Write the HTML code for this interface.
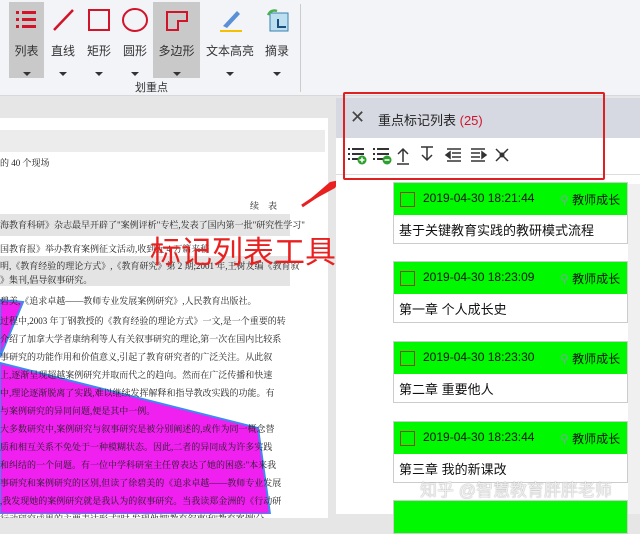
<!DOCTYPE html>
<html><head><meta charset="utf-8"><style>
*{margin:0;padding:0;box-sizing:border-box}
body{width:640px;height:514px;overflow:hidden;position:relative;background:#e6e6e6;font-family:"Liberation Sans","Noto Sans CJK SC",sans-serif}
.abs{position:absolute}
#tb{left:0;top:0;width:640px;height:96px;background:#f3f4f8;border-bottom:1px solid #d8d8d8}
.btn{position:absolute;top:2px;height:76px;text-align:center;font-size:12px;color:#333}
.btn .lb{position:absolute;top:40px;width:100%}
.btn .ar{position:absolute;top:70px;left:50%;margin-left:-4px;border-left:4px solid transparent;border-right:4px solid transparent;border-top:4px solid #333}
.sel{background:#c9c9c9}
#pagebg{left:0;top:118px;width:328px;height:400px;background:#fff}
#page{left:0;top:118px;width:328px;height:400px;font-family:"Liberation Serif","Noto Serif CJK SC",serif;font-size:9px;color:#222;overflow:hidden}
.ln{position:absolute;left:0;white-space:nowrap}
#panel{left:336px;top:98px;width:304px;height:416px;background:#fff}
.card{position:absolute;left:393px;width:235px;border:1px solid #ccc;background:#fff;overflow:hidden}
.gh{height:32px;background:#00f800;font-size:12px;color:#111;position:relative}
.gh .cb{position:absolute;left:6px;top:9px;width:15px;height:15px;border:1.5px solid #8a4a10}
.gh .t{position:absolute;left:29px;top:8px}
.gh .g{position:absolute;left:168px;top:8px;white-space:nowrap}
.tx{height:28px;font-size:13px;padding:5px 5px;color:#111}
</style></head><body>
<div id="tb" class="abs">
 <div class="btn sel" style="left:9px;width:35px">
  <svg class="abs" style="left:7px;top:6px" width="22" height="22"><g fill="#d2142a"><rect x="0" y="3" width="3" height="3"/><rect x="6" y="3" width="14" height="3"/><rect x="0" y="10" width="3" height="3"/><rect x="6" y="10" width="14" height="3"/><rect x="0" y="17" width="3" height="3"/><rect x="6" y="17" width="14" height="3"/></g></svg>
  <div class="lb">列表</div><div class="ar"></div></div>
 <div class="btn" style="left:46px;width:34px">
  <svg class="abs" style="left:6px;top:6px" width="24" height="24"><line x1="2" y1="22" x2="21" y2="2" stroke="#d2142a" stroke-width="2.5"/></svg>
  <div class="lb">直线</div><div class="ar"></div></div>
 <div class="btn" style="left:82px;width:34px">
  <svg class="abs" style="left:5px;top:6px" width="24" height="24"><rect x="2" y="2" width="20" height="20" fill="none" stroke="#d2142a" stroke-width="2"/></svg>
  <div class="lb">矩形</div><div class="ar"></div></div>
 <div class="btn" style="left:117px;width:36px">
  <svg class="abs" style="left:4px;top:5px" width="28" height="26"><ellipse cx="14" cy="13" rx="12" ry="11" fill="none" stroke="#d2142a" stroke-width="2"/></svg>
  <div class="lb">圆形</div><div class="ar"></div></div>
 <div class="btn sel" style="left:153px;width:47px">
  <svg class="abs" style="left:12px;top:8px" width="24" height="22"><path d="M2 2H22V11H13V20H2Z" fill="none" stroke="#d2142a" stroke-width="2"/></svg>
  <div class="lb">多边形</div><div class="ar"></div></div>
 <div class="btn" style="left:203px;width:54px">
  <svg class="abs" style="left:15px;top:5px" width="26" height="26"><path d="M5 19L19 4L22 7L9 21Z" fill="#5b8fd6"/><rect x="2" y="23" width="22" height="2" fill="#f5c000"/></svg>
  <div class="lb">文本高亮</div><div class="ar"></div></div>
 <div class="btn" style="left:260px;width:34px">
  <svg class="abs" style="left:6px;top:5px" width="24" height="26"><rect x="4" y="6" width="18" height="18" fill="#bde0f0" stroke="#3a7fb0"/><path d="M12 12V20H20" fill="none" stroke="#1a4f80" stroke-width="2"/><path d="M2 8Q5 2 11 4" fill="none" stroke="#4caf50" stroke-width="2.5"/></svg>
  <div class="lb">摘录</div><div class="ar"></div></div>
 <div class="abs" style="left:135px;top:79px;font-size:11px;color:#333">划重点</div>
 <div class="abs" style="left:300px;top:4px;width:1px;height:88px;background:#ccc"></div>
</div>

<div id="pagebg" class="abs"></div>
<svg class="abs" style="left:0;top:0" width="340" height="514">
 <path d="M0 300L23 302L0 357Z" fill="#f020f0" stroke="#3b8cf0" stroke-width="2"/>
 <path d="M0 363L258 428L270 514L0 514Z" fill="#f020f0" stroke="#3b8cf0" stroke-width="2"/>
</svg>
<div id="page" class="abs">
 <div class="abs" style="left:0;top:12px;width:325px;height:22px;background:#ececec"></div>
 <div class="ln" style="top:38px">的 40 个现场</div>
 <div class="ln" style="top:81px;left:250px">续　表</div>
 <div class="abs" style="left:0;top:96px;width:290px;height:22px;background:#e4e4e4"></div>
 <div class="ln" style="top:100px">海教育科研》杂志最早开辟了"案例评析"专栏,发表了国内第一批"研究性学习"</div>
 <div class="ln" style="top:124px">国教育报》举办教育案例征文活动,收到近 4 万篇来稿</div>
 <div class="abs" style="left:0;top:138px;width:290px;height:30px;background:#e4e4e4"></div>
 <div class="ln" style="top:141px">明,《教育经验的理论方式》,《教育研究》第 2 期;2001 年,王树友编《教育叙</div>
 <div class="ln" style="top:155px">》集刊,倡导叙事研究。</div>
 <div class="ln" style="top:176px">碧美,《追求卓越——教师专业发展案例研究》,人民教育出版社。</div>
 <div class="ln" style="top:196px">过程中,2003 年丁钢教授的《教育经验的理论方式》一文,是一个重要的转</div>
 <div class="ln" style="top:214px">介绍了加拿大学者康纳利等人有关叙事研究的理论,第一次在国内比较系</div>
 <div class="ln" style="top:232px">事研究的功能作用和价值意义,引起了教育研究者的广泛关注。从此叙</div>
 <div class="ln" style="top:250px">上,逐渐呈现超越案例研究并取而代之的趋向。然而在广泛传播和快速</div>
 <div class="ln" style="top:268px">中,理论逐渐脱离了实践,难以继续发挥解释和指导教改实践的功能。有</div>
 <div class="ln" style="top:286px">与案例研究的异同问题,便是其中一例。</div>
 <div class="ln" style="top:304px">大多数研究中,案例研究与叙事研究是被分别阐述的,或作为同一概念替</div>
 <div class="ln" style="top:322px">质和相互关系不免处于一种模糊状态。因此,二者的异同成为许多实践</div>
 <div class="ln" style="top:340px">和纠结的一个问题。有一位中学科研室主任曾表达了她的困惑:"本来我</div>
 <div class="ln" style="top:358px">事研究和案例研究的区别,但读了徐碧美的《追求卓越——教师专业发展</div>
 <div class="ln" style="top:376px">,我发现她的案例研究就是我认为的叙事研究。当我读郑金洲的《行动研</div>
 <div class="ln" style="top:394px">行动研究成果的主要表达形式"时,发现他把'教育叙事'和'教育案例'分</div>
</div>
<svg class="abs" style="left:0;top:0" width="340" height="514">
 <path d="M302 206L335 188L340 180L330 182Z" fill="#e82020"/>
 <line x1="302" y1="206" x2="338" y2="182" stroke="#e82020" stroke-width="3"/>
 <text x="150" y="263" font-size="31" fill="#e82020" font-family="Noto Sans CJK SC,sans-serif">标记列表工具</text>
</svg>

<div id="panel" class="abs">
 <div class="abs" style="left:0;top:0;width:304px;height:40px;background:#d6d9e2"></div>
 <div class="abs" style="left:14px;top:9px;font-size:18px;color:#444">✕</div>
 <div class="abs" style="left:42px;top:12px;font-size:13px;color:#222">重点标记列表 <span style="color:#d2142a">(25)</span></div>
 <svg class="abs" style="left:12px;top:48px" width="170" height="20">
  <g fill="#333"><rect x="0" y="2" width="2" height="2"/><rect x="4" y="2" width="12" height="2"/><rect x="0" y="7" width="2" height="2"/><rect x="4" y="7" width="12" height="2"/><rect x="0" y="12" width="2" height="2"/><rect x="4" y="12" width="6" height="2"/></g>
  <circle cx="14" cy="14" r="4.5" fill="#2e9e2e"/><path d="M11.5 14H16.5M14 11.5V16.5" stroke="#fff" stroke-width="1.5"/>
  <g fill="#333" transform="translate(25,0)"><rect x="0" y="2" width="2" height="2"/><rect x="4" y="2" width="12" height="2"/><rect x="0" y="7" width="2" height="2"/><rect x="4" y="7" width="12" height="2"/><rect x="0" y="12" width="2" height="2"/><rect x="4" y="12" width="6" height="2"/></g>
  <circle cx="39" cy="14" r="4.5" fill="#2e9e2e"/><path d="M36.5 14H41.5" stroke="#fff" stroke-width="1.5"/>
  <path d="M55 16V3M50 8L55 3L60 8M49 18H61" fill="none" stroke="#333" stroke-width="1.5"/>
  <path d="M79 1V14M74 9L79 14L84 9M73 1H85" fill="none" stroke="#333" stroke-width="1.5"/>
  <path d="M99 3H113M104 7H113M104 11H113M99 15H113M102 6L98 9L102 12Z" fill="#333" stroke="#333" stroke-width="1.5"/>
  <path d="M123 3H137M123 7H132M123 11H132M123 15H137M134 6L138 9L134 12Z" fill="#333" stroke="#333" stroke-width="1.5"/>
  <g stroke="#333" stroke-width="1.5"><line x1="148" y1="3" x2="160" y2="15"/><line x1="160" y1="3" x2="148" y2="15"/></g><circle cx="154" cy="9" r="2.5" fill="#333"/>
 </svg>
 <div class="abs" style="left:0;top:76px;width:304px;height:1px;background:#ddd"></div>
 <div class="abs" style="left:292px;top:86px;width:12px;height:330px;background:#f0f0f0"></div>
</div>
<div class="abs" style="left:343px;top:92px;width:262px;height:88px;border:2px solid #e02020;border-radius:2px"></div>

<div class="card" style="top:182px"><div class="gh"><div class="cb"></div><div class="t">2019-04-30 18:21:44</div><div class="g" style="left:166px"><span style="color:#7a9">⚲</span> 教师成长</div></div><div class="tx">基于关键教育实践的教研模式流程</div></div>
<div class="card" style="top:261px"><div class="gh"><div class="cb"></div><div class="t">2019-04-30 18:23:09</div><div class="g" style="left:166px"><span style="color:#7a9">⚲</span> 教师成长</div></div><div class="tx">第一章 个人成长史</div></div>
<div class="card" style="top:341px"><div class="gh"><div class="cb"></div><div class="t">2019-04-30 18:23:30</div><div class="g" style="left:166px"><span style="color:#7a9">⚲</span> 教师成长</div></div><div class="tx">第二章 重要他人</div></div>
<div class="card" style="top:421px"><div class="gh"><div class="cb"></div><div class="t">2019-04-30 18:23:44</div><div class="g" style="left:166px"><span style="color:#7a9">⚲</span> 教师成长</div></div><div class="tx">第三章 我的新课改</div></div>
<div class="card" style="top:500px"><div class="gh"></div></div>
<div class="abs" style="left:420px;top:476px;font-size:17px;color:rgba(255,255,255,0.85);text-shadow:0 0 1px #777;white-space:nowrap">知乎 @智慧教育胖胖老师</div>
</body></html>
